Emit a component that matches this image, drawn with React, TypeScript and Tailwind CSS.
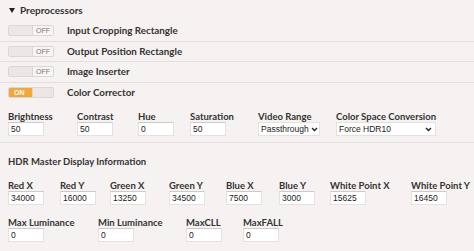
import React from "react";

const toggles = [
  { label: "Input Cropping Rectangle", on: false },
  { label: "Output Position Rectangle", on: false },
  { label: "Image Inserter", on: false },
  { label: "Color Corrector", on: true },
];

const hdr = [
  { label: "Red X", value: "34000", w: "w-[52px]" },
  { label: "Red Y", value: "16000", w: "w-[50px]" },
  { label: "Green X", value: "13250", w: "w-[59px]" },
  { label: "Green Y", value: "34500", w: "w-[57px]" },
  { label: "Blue X", value: "7500", w: "w-[53px]" },
  { label: "Blue Y", value: "3000", w: "w-[51px]" },
  { label: "White Point X", value: "15625", w: "w-[81px]" },
  { label: "White Point Y", value: "16450", w: "w-[60px]" },
];

const lum = [
  { label: "Max Luminance", value: "0", w: "w-[90px]" },
  { label: "Min Luminance", value: "0", w: "w-[88px]" },
  { label: "MaxCLL", value: "0", w: "w-[57px]" },
  { label: "MaxFALL", value: "0", w: "w-[60px]" },
];

function Toggle({ on }: { on: boolean }) {
  return (
    <div className="flex h-[11px] w-[46px] overflow-hidden rounded-[2px] border border-[#dcd7d7] text-[7px] leading-none font-['Liberation_Sans',sans-serif]">
      {on ? (
        <>
          <div className="flex w-[23px] items-center pl-[5px] bg-[#f3a73b] text-white font-bold">
            ON
          </div>
          <div className="flex-1 bg-[#ebe7e7] border-l border-[#dcd7d7]" />
        </>
      ) : (
        <>
          <div className="w-[23px] bg-[#ebe7e7]" />
          <div className="flex flex-1 items-center justify-center bg-[#f7f5f5] border-l border-[#dcd7d7] text-[#7d7878]">
            OFF
          </div>
        </>
      )}
    </div>
  );
}

function Field({
  label,
  value,
  w,
}: {
  label: string;
  value: string;
  w: string;
}) {
  return (
    <div className={`${w} shrink-0`}>
      <div className="text-[9.5px] font-bold leading-[11px] text-[#333] whitespace-nowrap">
        {label}
      </div>
      <div className="h-[14px] w-[36px] bg-white border border-[#e6e1e1] border-t-[#cfcaca] px-[2px] text-[8.5px] leading-[12px] text-[#222] font-['Liberation_Sans',sans-serif]">
        {value}
      </div>
    </div>
  );
}

function Select({ value, w }: { value: string; w: string }) {
  return (
    <div
      className={`${w} flex h-[14px] items-center justify-between gap-[2px] bg-white border border-[#e6e1e1] pl-[2px] pr-[3px] text-[8.5px] text-[#222] font-['Liberation_Sans',sans-serif]`}
    >
      <span className="whitespace-nowrap">{value}</span>
      <svg width="7" height="5" viewBox="0 0 7 5" className="shrink-0">
        <path d="M1 1l2.5 2.5L6 1" stroke="#222" strokeWidth="1.4" fill="none" />
      </svg>
    </div>
  );
}

export default function App() {
  return (
    <div className="h-[251px] w-[474px] overflow-hidden bg-[#f7f2f2] font-['Lato',sans-serif] text-[#333]">
      <div className="flex h-[21px] items-center pl-[9px] text-[10px] font-bold">
        <svg width="6" height="5" viewBox="0 0 6 5" className="mr-[5px]">
          <path d="M0 0h6L3 5z" fill="#222" />
        </svg>
        Preprocessors
      </div>

      {toggles.map((t, i) => (
        <div
          key={t.label}
          className={`flex h-[20.5px] items-center pl-[8px] ${
            i < toggles.length - 1 ? "border-b border-[#e3dddd]" : ""
          }`}
        >
          <Toggle on={t.on} />
          <span className="ml-[13px] text-[9.8px] font-bold">{t.label}</span>
        </div>
      ))}

      <div className="flex pl-[8px] pt-[8px] pb-[6px] border-b border-[#e3dddd]">
        <Field label="Brightness" value="50" w="w-[69px]" />
        <Field label="Contrast" value="50" w="w-[61px]" />
        <Field label="Hue" value="0" w="w-[52px]" />
        <Field label="Saturation" value="50" w="w-[68px]" />
        <div className="w-[78px] shrink-0">
          <div className="text-[9.5px] font-bold leading-[11px] whitespace-nowrap">
            Video Range
          </div>
          <Select value="Passthrough" w="w-[62px]" />
        </div>
        <div className="shrink-0">
          <div className="text-[9.5px] font-bold leading-[11px] whitespace-nowrap">
            Color Space Conversion
          </div>
          <Select value="Force HDR10" w="w-[100px]" />
        </div>
      </div>

      <div className="pl-[8px] pt-[13px] text-[9.5px] font-bold leading-[11px]">
        HDR Master Display Information
      </div>

      <div className="flex pl-[8px] pt-[13px]">
        {hdr.map((f) => (
          <Field key={f.label} {...f} />
        ))}
      </div>

      <div className="flex pl-[8px] pt-[12px]">
        {lum.map((f) => (
          <Field key={f.label} {...f} />
        ))}
      </div>
    </div>
  );
}
